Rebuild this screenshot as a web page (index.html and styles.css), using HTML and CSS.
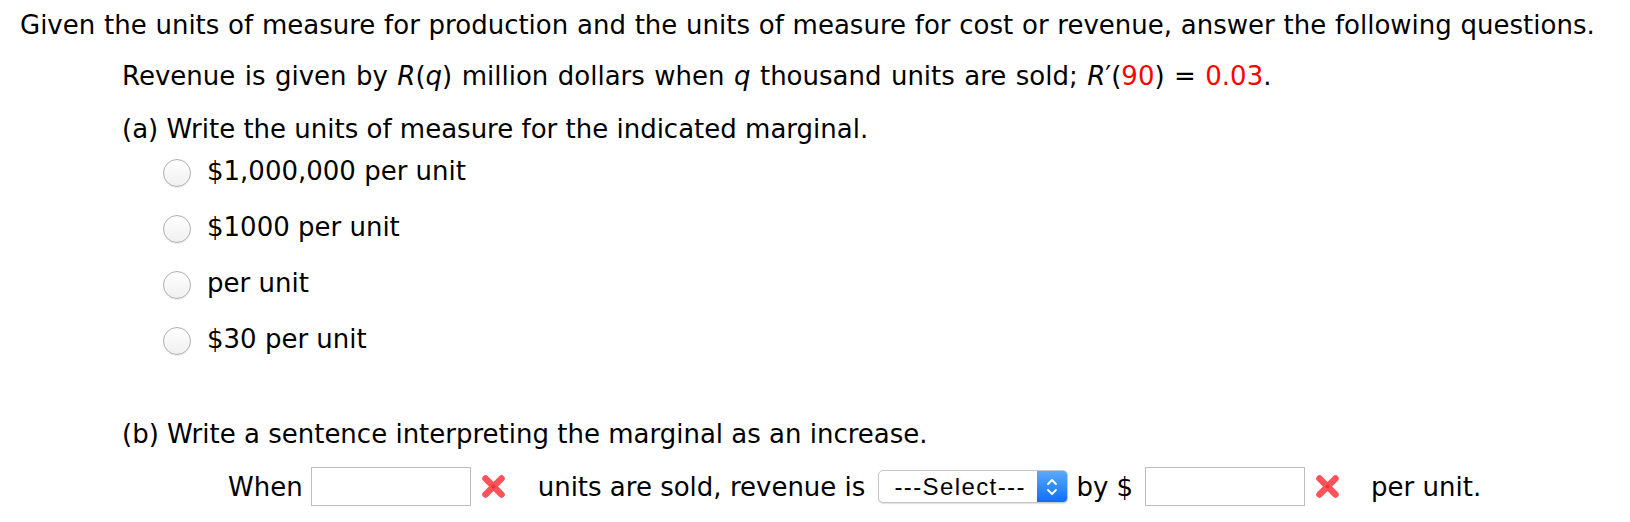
FILE: index.html
```html
<!DOCTYPE html>
<html>
<head>
<meta charset="utf-8">
<link rel="stylesheet" href="styles.css">
</head>
<body>
<div class="page">
  <p class="lead">Given the units of measure for production and the units of measure for cost or revenue, answer the following questions.</p>
  <div class="problem">
    <p class="given">Revenue is given by <i>R</i>(<i>q</i>) million dollars when <i>q</i> thousand units are sold; <i>R</i>′(<span class="red">90</span>) = <span class="red">0.03</span>.</p>
    <p class="part part-a">(a) Write the units of measure for the indicated marginal.</p>
    <ul class="options">
      <li><span class="radio"></span>$1,000,000 per unit</li>
      <li><span class="radio"></span>$1000 per unit</li>
      <li><span class="radio"></span>per unit</li>
      <li><span class="radio"></span>$30 per unit</li>
    </ul>
    <p class="part part-b">(b) Write a sentence interpreting the marginal as an increase.</p>
    <div class="sentence">
      <span class="word">When</span>
      <span class="answer a1"></span>
      <svg class="wrong" width="27" height="27" viewBox="0 0 27 27"><path d="M5.5 5.5 L21.5 21.5 M21.5 5.5 L5.5 21.5" stroke="#ff5259" stroke-width="6.5" stroke-linecap="round"/><circle cx="13.5" cy="13.5" r="2" fill="#f0303a"/></svg>
      <span class="word w2">units are sold, revenue is</span>
      <div class="select"><span class="select-text">---Select---</span><span class="select-btn"><svg width="12" height="22" viewBox="0 0 12 22"><path d="M2 8 L6 4 L10 8 M2 14 L6 18 L10 14" stroke="#fff" stroke-width="1.8" fill="none" stroke-linecap="round" stroke-linejoin="round"/></svg></span></div>
      <span class="word w3">by $</span>
      <span class="answer a2"></span>
      <svg class="wrong" width="27" height="27" viewBox="0 0 27 27"><path d="M5.5 5.5 L21.5 21.5 M21.5 5.5 L5.5 21.5" stroke="#ff5259" stroke-width="6.5" stroke-linecap="round"/><circle cx="13.5" cy="13.5" r="2" fill="#f0303a"/></svg>
      <span class="word w4">per unit.</span>
    </div>
  </div>
</div>
</body>
</html>
```
FILE: styles.css
```css
body {
  margin: 0;
  background: #fff;
  color: #000;
  font-family: "DejaVu Sans", Verdana, sans-serif;
  font-size: 26px;
}
.page { padding-top: 10px; }
p { margin: 0; }
.lead { padding-left: 20px; line-height: 30px; word-spacing: 0.5px; }
.problem { padding-left: 122px; }
.given { margin-top: 21px; line-height: 30px; word-spacing: 1.2px; }
.red { color: #ff0000; }
.part-a { margin-top: 25px; line-height: 26px; }
.options {
  list-style: none;
  margin: 1px 0 0;
  padding: 0 0 0 41px;
}
.options li { line-height: 56px; height: 56px; }
.radio {
  display: inline-block;
  width: 28px;
  height: 28px;
  box-sizing: border-box;
  border-radius: 50%;
  border: 1px solid #b0b0b0;
  background: linear-gradient(#ffffff, #f0f0f0);
  box-shadow: 0 1px 1px rgba(0,0,0,0.08);
  vertical-align: middle;
  margin-right: 16px;
}
.part-b { margin-top: 52px; line-height: 30px; }
.sentence {
  display: flex;
  align-items: center;
  height: 39px;
  margin-top: 18px;
  padding-left: 106px;
  line-height: 30px;
}
.answer {
  display: block;
  width: 160px;
  height: 39px;
  box-sizing: border-box;
  border: 1px solid #bdbdbd;
  background: #fff;
}
.a1 { margin-left: 8px; }
.wrong { display: block; margin-left: 9px; }
.w2 { margin-left: 31px; }
.select {
  display: flex;
  margin-left: 13px;
  width: 190px;
  height: 33px;
  box-sizing: border-box;
  border: 1px solid #c6c6c6;
  border-radius: 5px;
  background: #fff;
  box-shadow: 0 1px 1px rgba(0,0,0,0.12);
  overflow: hidden;
  font-family: "Liberation Sans", Arial, sans-serif;
  font-size: 24px;
  letter-spacing: 1.4px;
}
.select-text { flex: 1; padding-left: 15px; line-height: 31px; }
.select-btn {
  width: 30px;
  display: flex;
  align-items: center;
  justify-content: center;
  background: linear-gradient(#5aa9fb, #0d6ff6);
}
.select-btn svg { display: block; }
.w3 { margin-left: 8px; }
.a2 { margin-left: 12px; }
.w4 { margin-left: 30px; }
```
